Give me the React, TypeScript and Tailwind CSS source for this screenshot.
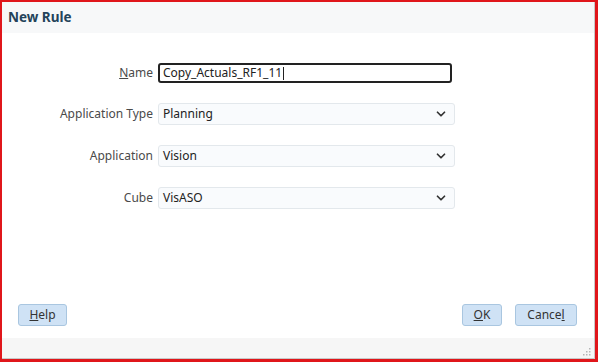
import { ChevronDown } from 'lucide-react'

const font = { fontFamily: '"Noto Sans", "DejaVu Sans", sans-serif' }

function SelectField({ label, value }: { label: string; value: string }) {
  return (
    <div className="flex items-center">
      <div className="w-[156px] pr-[5px] text-right text-[12px] text-[#4a4a4a]">{label}</div>
      <div className="flex h-[22px] w-[297px] items-center justify-between rounded-[3px] border border-[#e3e8ec] bg-[#f9fbfd] pl-[4px] pr-[6px] text-[12px] text-[#222]">
        <span>{value}</span>
        <ChevronDown size={14} strokeWidth={3} className="text-[#333]" />
      </div>
    </div>
  )
}

export default function App() {
  return (
    <div className="h-[364px] w-[600px] bg-white" style={font}>
      <div className="flex h-[362px] w-[598px] flex-col border-t-[2px] border-r-[3px] border-b-[3px] border-l-[2px] border-[#e0161b]">
        <div className="flex flex-1 flex-col border-r border-b border-[#c8c8c8]">
          {/* Title */}
          <div className="flex h-[31px] items-center bg-[#f7f8f9] pl-[6px] text-[13.5px] font-bold text-[#24435a]">
            New Rule
          </div>

          {/* Form */}
          <div className="flex flex-1 flex-col pt-[30px]">
            <div className="flex items-center">
              <div className="w-[156px] pr-[5px] text-right text-[12px] text-[#4a4a4a]">
                <span className="underline">N</span>ame
              </div>
              <div className="flex h-[20px] w-[294px] items-center rounded-[3px] border-[2px] border-[#222] pl-[3px] text-[12px] text-[#222]">
                Copy_Actuals_RF1_11<span className="ml-[1px] h-[13px] w-px bg-[#222]" />
              </div>
            </div>
            <div className="mt-[20px] flex flex-col gap-[20px]">
              <SelectField label="Application Type" value="Planning" />
              <SelectField label="Application" value="Vision" />
              <SelectField label="Cube" value="VisASO" />
            </div>

            <div className="mt-auto mb-[12px] flex items-center px-[16px]">
              <button className="flex h-[22px] w-[49px] items-center justify-center rounded-[3px] border border-[#a9c6e0] bg-[#cfe2f5] text-[12px] text-[#333]">
                <span className="underline">H</span>elp
              </button>
              <div className="flex-1" />
              <button className="flex h-[22px] w-[40px] items-center justify-center rounded-[3px] border border-[#a9c6e0] bg-[#cfe2f5] text-[12px] text-[#333]">
                <span className="underline">O</span>K
              </button>
              <button className="ml-[13px] mr-[1px] flex h-[22px] w-[62px] items-center justify-center rounded-[3px] border border-[#a9c6e0] bg-[#cfe2f5] text-[12px] text-[#333]">
                Cance<span className="underline">l</span>
              </button>
            </div>
          </div>

          {/* Footer strip */}
          <div className="relative h-[20px] bg-[#f6f6f6]">
            <svg className="absolute right-[3px] bottom-[2px]" width="10" height="10" viewBox="0 0 10 10">
              <g fill="#b5b5b5">
                <rect x="8" y="2" width="1.5" height="1.5" />
                <rect x="5" y="5" width="1.5" height="1.5" />
                <rect x="8" y="5" width="1.5" height="1.5" />
                <rect x="2" y="8" width="1.5" height="1.5" />
                <rect x="5" y="8" width="1.5" height="1.5" />
                <rect x="8" y="8" width="1.5" height="1.5" />
              </g>
            </svg>
          </div>
        </div>
      </div>
    </div>
  )
}
